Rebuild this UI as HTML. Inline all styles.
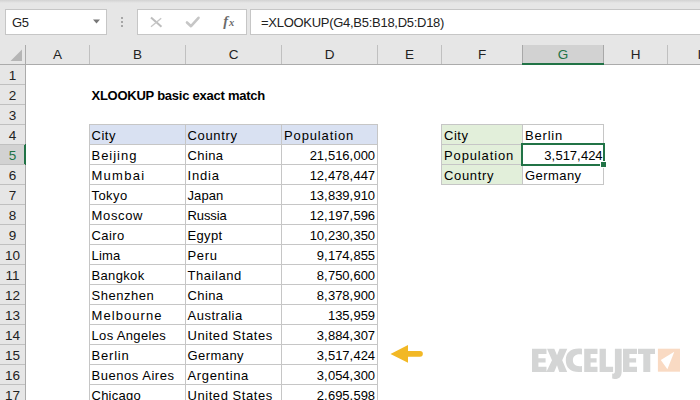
<!DOCTYPE html><html><head><meta charset="utf-8"><style>
*{margin:0;padding:0;box-sizing:border-box}
html,body{width:700px;height:400px;overflow:hidden;background:#fff}
body{position:relative;font-family:"Liberation Sans",sans-serif;color:#000}
.a{position:absolute}
.t{position:absolute;white-space:nowrap;font-size:13px;line-height:20px;height:20px}
.n{letter-spacing:-0.1px;text-align:right}
.hl{position:absolute;background:#c6c6c6}
</style></head><body>

<div class="a" style="left:0;top:0;width:700px;height:65px;background:#e6e6e6"></div>
<div class="a" style="left:0;top:0;width:700px;height:3px;background:linear-gradient(#d2d2d2,#e6e6e6)"></div>
<div class="a" style="left:5px;top:9px;width:102px;height:26px;background:#fff;border:1px solid #c6c6c6"></div>
<div class="t" style="left:12px;top:13px;font-size:13px;letter-spacing:-0.3px;color:#222">G5</div>
<svg class="a" style="left:92px;top:18px" width="9" height="7"><path d="M1 1.5 L8 1.5 L4.5 5.5 Z" fill="#777"/></svg>
<div class="a" style="left:121px;top:17px;width:2px;height:2px;background:#a6a6a6"></div>
<div class="a" style="left:121px;top:21px;width:2px;height:2px;background:#a6a6a6"></div>
<div class="a" style="left:121px;top:25px;width:2px;height:2px;background:#a6a6a6"></div>
<div class="a" style="left:137px;top:9px;width:110px;height:26px;background:#fff;border:1px solid #c6c6c6"></div>
<svg class="a" style="left:148px;top:15px" width="16" height="14"><path d="M3 2.5 L13.5 11.8" stroke="#bdbdbd" stroke-width="2"/><path d="M13.2 3.2 L3 11.8" stroke="#c6c6c6" stroke-width="1.4"/></svg>
<svg class="a" style="left:184px;top:15px" width="18" height="14"><path d="M3 7.5 L7 11.2 L14.5 2.8" stroke="#c6c6c6" stroke-width="2.6" fill="none" stroke-linecap="round" stroke-linejoin="round"/></svg>
<svg class="a" style="left:215px;top:10px" width="25" height="22"><text x="8.3" y="15.5" font-family="Liberation Serif" font-style="italic" font-weight="bold" font-size="14.5" fill="#6b6b6b">f</text><text x="14" y="15.8" font-family="Liberation Serif" font-style="italic" font-weight="bold" font-size="10.5" fill="#6b6b6b">x</text></svg>
<div class="a" style="left:250px;top:9px;width:460px;height:26px;background:#fff;border:1px solid #c6c6c6"></div>
<div class="t" style="left:261px;top:12.5px;font-size:13px;letter-spacing:-0.28px;color:#222">=XLOOKUP(G4,B5:B18,D5:D18)</div>
<div class="a" style="left:0;top:64px;width:700px;height:1px;background:#ababab"></div>
<svg class="a" style="left:10px;top:49px" width="13" height="13"><path d="M12 0.5 L12 12 L0.5 12 Z" fill="#b5b5b5"/></svg>
<div class="a" style="left:523px;top:45px;width:80px;height:19px;background:#d2d2d2"></div>
<div class="a" style="left:89px;top:45px;width:1px;height:19px;background:#c0c0c0"></div>
<div class="t" style="left:26px;top:45px;width:63px;text-align:center;font-size:13.5px;color:#222">A</div>
<div class="a" style="left:185px;top:45px;width:1px;height:19px;background:#c0c0c0"></div>
<div class="t" style="left:90px;top:45px;width:95px;text-align:center;font-size:13.5px;color:#222">B</div>
<div class="a" style="left:281px;top:45px;width:1px;height:19px;background:#c0c0c0"></div>
<div class="t" style="left:186px;top:45px;width:95px;text-align:center;font-size:13.5px;color:#222">C</div>
<div class="a" style="left:377px;top:45px;width:1px;height:19px;background:#c0c0c0"></div>
<div class="t" style="left:282px;top:45px;width:95px;text-align:center;font-size:13.5px;color:#222">D</div>
<div class="a" style="left:441px;top:45px;width:1px;height:19px;background:#c0c0c0"></div>
<div class="t" style="left:378px;top:45px;width:63px;text-align:center;font-size:13.5px;color:#222">E</div>
<div class="a" style="left:522px;top:45px;width:1px;height:19px;background:#a8a8a8"></div>
<div class="t" style="left:442px;top:45px;width:80px;text-align:center;font-size:13.5px;color:#222">F</div>
<div class="a" style="left:603px;top:45px;width:1px;height:19px;background:#a8a8a8"></div>
<div class="t" style="left:523px;top:45px;width:80px;text-align:center;font-size:13.5px;color:#217346">G</div>
<div class="a" style="left:667px;top:45px;width:1px;height:19px;background:#c0c0c0"></div>
<div class="t" style="left:604px;top:45px;width:63px;text-align:center;font-size:13.5px;color:#222">H</div>
<div class="a" style="left:731px;top:45px;width:1px;height:19px;background:#c0c0c0"></div>
<div class="t" style="left:668px;top:45px;width:63px;text-align:center;font-size:13.5px;color:#222">I</div>
<div class="a" style="left:522px;top:63px;width:82px;height:2px;background:#217346"></div>
<div class="a" style="left:0;top:65px;width:25px;height:340px;background:#e6e6e6"></div>
<div class="a" style="left:25px;top:45px;width:1px;height:360px;background:#ababab"></div>
<div class="a" style="left:0;top:145px;width:24px;height:19px;background:#d2d2d2"></div>
<div class="a" style="left:24px;top:144px;width:2px;height:21px;background:#217346"></div>
<div class="a" style="left:0;top:84px;width:25px;height:1px;background:#c0c0c0"></div>
<div class="t" style="left:0;top:66px;width:25px;text-align:center;font-size:13.5px;color:#222">1</div>
<div class="a" style="left:0;top:104px;width:25px;height:1px;background:#c0c0c0"></div>
<div class="t" style="left:0;top:86px;width:25px;text-align:center;font-size:13.5px;color:#222">2</div>
<div class="a" style="left:0;top:124px;width:25px;height:1px;background:#c0c0c0"></div>
<div class="t" style="left:0;top:106px;width:25px;text-align:center;font-size:13.5px;color:#222">3</div>
<div class="a" style="left:0;top:144px;width:25px;height:1px;background:#c0c0c0"></div>
<div class="t" style="left:0;top:126px;width:25px;text-align:center;font-size:13.5px;color:#222">4</div>
<div class="a" style="left:0;top:164px;width:25px;height:1px;background:#c0c0c0"></div>
<div class="t" style="left:0;top:146px;width:25px;text-align:center;font-size:13.5px;color:#217346">5</div>
<div class="a" style="left:0;top:184px;width:25px;height:1px;background:#c0c0c0"></div>
<div class="t" style="left:0;top:166px;width:25px;text-align:center;font-size:13.5px;color:#222">6</div>
<div class="a" style="left:0;top:204px;width:25px;height:1px;background:#c0c0c0"></div>
<div class="t" style="left:0;top:186px;width:25px;text-align:center;font-size:13.5px;color:#222">7</div>
<div class="a" style="left:0;top:224px;width:25px;height:1px;background:#c0c0c0"></div>
<div class="t" style="left:0;top:206px;width:25px;text-align:center;font-size:13.5px;color:#222">8</div>
<div class="a" style="left:0;top:244px;width:25px;height:1px;background:#c0c0c0"></div>
<div class="t" style="left:0;top:226px;width:25px;text-align:center;font-size:13.5px;color:#222">9</div>
<div class="a" style="left:0;top:264px;width:25px;height:1px;background:#c0c0c0"></div>
<div class="t" style="left:0;top:246px;width:25px;text-align:center;font-size:13.5px;color:#222">10</div>
<div class="a" style="left:0;top:284px;width:25px;height:1px;background:#c0c0c0"></div>
<div class="t" style="left:0;top:266px;width:25px;text-align:center;font-size:13.5px;color:#222">11</div>
<div class="a" style="left:0;top:304px;width:25px;height:1px;background:#c0c0c0"></div>
<div class="t" style="left:0;top:286px;width:25px;text-align:center;font-size:13.5px;color:#222">12</div>
<div class="a" style="left:0;top:324px;width:25px;height:1px;background:#c0c0c0"></div>
<div class="t" style="left:0;top:306px;width:25px;text-align:center;font-size:13.5px;color:#222">13</div>
<div class="a" style="left:0;top:344px;width:25px;height:1px;background:#c0c0c0"></div>
<div class="t" style="left:0;top:326px;width:25px;text-align:center;font-size:13.5px;color:#222">14</div>
<div class="a" style="left:0;top:364px;width:25px;height:1px;background:#c0c0c0"></div>
<div class="t" style="left:0;top:346px;width:25px;text-align:center;font-size:13.5px;color:#222">15</div>
<div class="a" style="left:0;top:384px;width:25px;height:1px;background:#c0c0c0"></div>
<div class="t" style="left:0;top:366px;width:25px;text-align:center;font-size:13.5px;color:#222">16</div>
<div class="a" style="left:0;top:404px;width:25px;height:1px;background:#c0c0c0"></div>
<div class="t" style="left:0;top:386px;width:25px;text-align:center;font-size:13.5px;color:#222">17</div>
<div class="t" style="left:91.5px;top:86px;font-weight:bold;font-size:13px;letter-spacing:-0.25px">XLOOKUP basic exact match</div>
<div class="a" style="left:90px;top:125px;width:287px;height:19px;background:#d9e1f2"></div>
<div class="hl" style="left:89px;top:124px;width:289px;height:1px"></div>
<div class="hl" style="left:89px;top:144px;width:289px;height:1px"></div>
<div class="hl" style="left:89px;top:164px;width:289px;height:1px"></div>
<div class="hl" style="left:89px;top:184px;width:289px;height:1px"></div>
<div class="hl" style="left:89px;top:204px;width:289px;height:1px"></div>
<div class="hl" style="left:89px;top:224px;width:289px;height:1px"></div>
<div class="hl" style="left:89px;top:244px;width:289px;height:1px"></div>
<div class="hl" style="left:89px;top:264px;width:289px;height:1px"></div>
<div class="hl" style="left:89px;top:284px;width:289px;height:1px"></div>
<div class="hl" style="left:89px;top:304px;width:289px;height:1px"></div>
<div class="hl" style="left:89px;top:324px;width:289px;height:1px"></div>
<div class="hl" style="left:89px;top:344px;width:289px;height:1px"></div>
<div class="hl" style="left:89px;top:364px;width:289px;height:1px"></div>
<div class="hl" style="left:89px;top:384px;width:289px;height:1px"></div>
<div class="hl" style="left:89px;top:404px;width:289px;height:1px"></div>
<div class="hl" style="left:89px;top:124px;width:1px;height:276px"></div>
<div class="hl" style="left:185px;top:124px;width:1px;height:276px"></div>
<div class="hl" style="left:281px;top:124px;width:1px;height:276px"></div>
<div class="hl" style="left:377px;top:124px;width:1px;height:276px"></div>
<div class="t" style="left:91.5px;top:126px;letter-spacing:0.5px">City</div>
<div class="t" style="left:187.5px;top:126px;letter-spacing:0.65px">Country</div>
<div class="t" style="left:284px;top:126px;letter-spacing:0.87px">Population</div>
<div class="t" style="left:91.5px;top:146px;letter-spacing:0.98px">Beijing</div>
<div class="t" style="left:187.5px;top:146px;letter-spacing:0.4px">China</div>
<div class="t n" style="left:282px;top:146px;width:93px">21<span style="letter-spacing:0.5px">,</span>516<span style="letter-spacing:0.5px">,</span>000</div>
<div class="t" style="left:91.5px;top:166px;letter-spacing:1.26px">Mumbai</div>
<div class="t" style="left:187.5px;top:166px;letter-spacing:0.8px">India</div>
<div class="t n" style="left:282px;top:166px;width:93px">12<span style="letter-spacing:0.5px">,</span>478<span style="letter-spacing:0.5px">,</span>447</div>
<div class="t" style="left:91.5px;top:186px;letter-spacing:0.42px">Tokyo</div>
<div class="t" style="left:187.5px;top:186px;letter-spacing:0.1px">Japan</div>
<div class="t n" style="left:282px;top:186px;width:93px">13<span style="letter-spacing:0.5px">,</span>839<span style="letter-spacing:0.5px">,</span>910</div>
<div class="t" style="left:91.5px;top:206px;letter-spacing:0.66px">Moscow</div>
<div class="t" style="left:187.5px;top:206px;letter-spacing:-0.12px">Russia</div>
<div class="t n" style="left:282px;top:206px;width:93px">12<span style="letter-spacing:0.5px">,</span>197<span style="letter-spacing:0.5px">,</span>596</div>
<div class="t" style="left:91.5px;top:226px;letter-spacing:0.4px">Cairo</div>
<div class="t" style="left:187.5px;top:226px;letter-spacing:0.35px">Egypt</div>
<div class="t n" style="left:282px;top:226px;width:93px">10<span style="letter-spacing:0.5px">,</span>230<span style="letter-spacing:0.5px">,</span>350</div>
<div class="t" style="left:91.5px;top:246px;letter-spacing:0.17px">Lima</div>
<div class="t" style="left:187.5px;top:246px;letter-spacing:0.67px">Peru</div>
<div class="t n" style="left:282px;top:246px;width:93px">9<span style="letter-spacing:0.5px">,</span>174<span style="letter-spacing:0.5px">,</span>855</div>
<div class="t" style="left:91.5px;top:266px;letter-spacing:0.35px">Bangkok</div>
<div class="t" style="left:187.5px;top:266px;letter-spacing:0.56px">Thailand</div>
<div class="t n" style="left:282px;top:266px;width:93px">8<span style="letter-spacing:0.5px">,</span>750<span style="letter-spacing:0.5px">,</span>600</div>
<div class="t" style="left:91.5px;top:286px;letter-spacing:0.53px">Shenzhen</div>
<div class="t" style="left:187.5px;top:286px;letter-spacing:0.4px">China</div>
<div class="t n" style="left:282px;top:286px;width:93px">8<span style="letter-spacing:0.5px">,</span>378<span style="letter-spacing:0.5px">,</span>900</div>
<div class="t" style="left:91.5px;top:306px;letter-spacing:1.07px">Melbourne</div>
<div class="t" style="left:187.5px;top:306px;letter-spacing:0.51px">Australia</div>
<div class="t n" style="left:282px;top:306px;width:93px">135<span style="letter-spacing:0.5px">,</span>959</div>
<div class="t" style="left:91.5px;top:326px;letter-spacing:0.35px">Los Angeles</div>
<div class="t" style="left:187.5px;top:326px;letter-spacing:0.56px">United States</div>
<div class="t n" style="left:282px;top:326px;width:93px">3<span style="letter-spacing:0.5px">,</span>884<span style="letter-spacing:0.5px">,</span>307</div>
<div class="t" style="left:91.5px;top:346px;letter-spacing:0.8px">Berlin</div>
<div class="t" style="left:187.5px;top:346px;letter-spacing:0.43px">Germany</div>
<div class="t n" style="left:282px;top:346px;width:93px">3<span style="letter-spacing:0.5px">,</span>517<span style="letter-spacing:0.5px">,</span>424</div>
<div class="t" style="left:91.5px;top:366px;letter-spacing:0.53px">Buenos Aires</div>
<div class="t" style="left:187.5px;top:366px;letter-spacing:0.64px">Argentina</div>
<div class="t n" style="left:282px;top:366px;width:93px">3<span style="letter-spacing:0.5px">,</span>054<span style="letter-spacing:0.5px">,</span>300</div>
<div class="t" style="left:91.5px;top:386px;letter-spacing:0.25px">Chicago</div>
<div class="t" style="left:187.5px;top:386px;letter-spacing:0.56px">United States</div>
<div class="t n" style="left:282px;top:386px;width:93px">2<span style="letter-spacing:0.5px">,</span>695<span style="letter-spacing:0.5px">,</span>598</div>
<div class="a" style="left:442px;top:125px;width:80px;height:59px;background:#e2efda"></div>
<div class="hl" style="left:441px;top:124px;width:163px;height:1px"></div>
<div class="hl" style="left:441px;top:144px;width:163px;height:1px"></div>
<div class="hl" style="left:441px;top:164px;width:163px;height:1px"></div>
<div class="hl" style="left:441px;top:184px;width:163px;height:1px"></div>
<div class="hl" style="left:441px;top:124px;width:1px;height:61px"></div>
<div class="hl" style="left:522px;top:124px;width:1px;height:61px"></div>
<div class="hl" style="left:603px;top:124px;width:1px;height:61px"></div>
<div class="t" style="left:444px;top:126px;letter-spacing:0.5px">City</div>
<div class="t" style="left:525px;top:126px;letter-spacing:0.8px">Berlin</div>
<div class="t" style="left:444px;top:146px;letter-spacing:0.87px">Population</div>
<div class="t n" style="left:523px;top:146px;width:79.5px">3<span style="letter-spacing:0.5px">,</span>517<span style="letter-spacing:0.5px">,</span>424</div>
<div class="t" style="left:444px;top:166px;letter-spacing:0.65px">Country</div>
<div class="t" style="left:525px;top:166px;letter-spacing:0.43px">Germany</div>
<div class="a" style="left:521px;top:143px;width:84px;height:23px;border:2px solid #217346"></div>
<div class="a" style="left:600px;top:161px;width:7px;height:7px;background:#217346;border:1px solid #fff"></div>
<svg class="a" style="left:388px;top:343px" width="40" height="22"><path d="M2.5 11 L20 2 L20 8 L32 8 A2.85 2.85 0 0 1 32 13.7 L20 13.7 L20 19.8 Z" fill="#f2b825"/></svg>
<svg class="a" style="left:0;top:0" width="700" height="400" viewBox="0 0 700 400"><path d="M532 348.7H546.5V354H538.4V358.2H545.6V362.6H538.4V366.8H546.5V372H532Z M547 348.7H554.3L557 355.3L559.5 348.7H567.3L562.2 360.3L567.2 372H559.3L557 365.2L554.2 372H546.3L552 360.3Z M582 348.8C571.5 347.6 565.8 352.2 565.8 360.3C565.8 368.4 571.5 373.2 582 371.9V366C576.2 367 572.9 364.6 572.9 360.3C572.9 356 576.2 353.4 582 354.5Z M584.2 348.7H597.5V354H590.6V358.2H596.6V362.6H590.6V366.8H597.5V372H584.2Z M599.6 348.7H605.9V366.7H613.1V372H599.6Z M614.9 348.7H621.7V371C621.7 377 619 379.2 614.5 379C613.5 379 612.6 378.8 612.2 378.6V373.6C614.2 374 614.9 373 614.9 371Z M623 348.7H637V354H629.4V358.2H636.1V362.6H629.4V366.8H637V372H623Z M638 348.7H655V354H650.3V372H643.3V354H638Z" fill="#d4d5d5"/><rect x="657.9" y="348.7" width="22.1" height="23" fill="#f9dac3"/><path d="M660.8 360.1L674.3 351.8L667.4 369.2Z" fill="#fff"/></svg>
</body></html>
